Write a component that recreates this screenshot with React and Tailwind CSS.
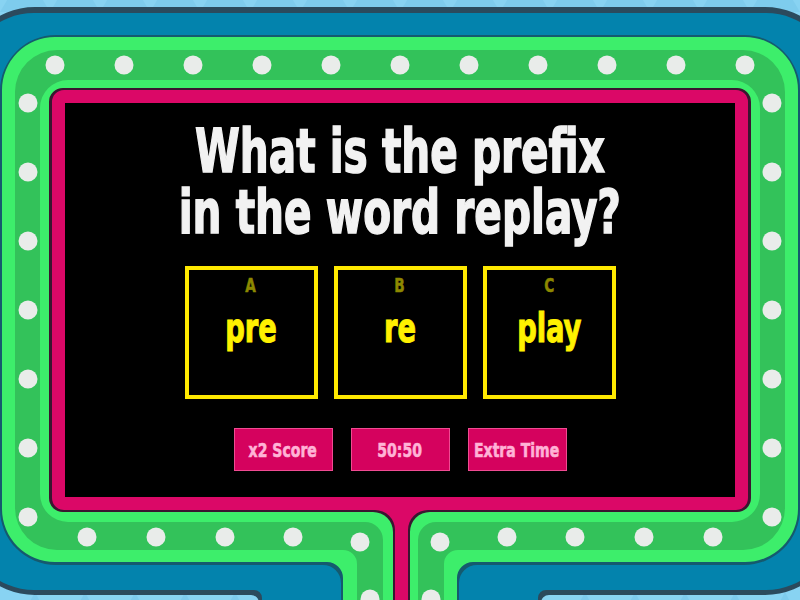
import React from "react";

function shape(x1, y1, x2, y2, r, sx1, sx2, f) {
  return `M${x1 + r},${y1} H${x2 - r} A${r},${r} 0 0 1 ${x2},${y1 + r} V${y2 - r} A${r},${r} 0 0 1 ${x2 - r},${y2} H${sx2 + f} A${f},${f} 0 0 0 ${sx2},${y2 + f} V640 H${sx1} V${y2 + f} A${f},${f} 0 0 0 ${sx1 - f},${y2} H${x1 + r} A${r},${r} 0 0 1 ${x1},${y2 - r} V${y1 + r} A${r},${r} 0 0 1 ${x1 + r},${y1} Z`;
}

const dots = [];
for (let k = 0; k <= 10; k++) dots.push([55 + 69 * k, 65]);
[103, 172, 241, 310, 379, 448, 517].forEach((y) => {
  dots.push([28, y]);
  dots.push([772, y]);
});
[87, 156, 225, 293, 507, 575, 644, 713].forEach((x) => dots.push([x, 537]));
dots.push([360, 542], [440, 542], [370, 599], [431, 599]);

const tris = [];
for (let i = -1; i < 17; i++) {
  const x = i * 50;
  tris.push(`M${x},12 L${x + 25},-30 L${x + 50},12 Z`);
}
for (let i = -1; i < 17; i++) {
  const x = i * 50 + 10;
  tris.push(`M${x},640 L${x + 25},592 L${x + 50},640 Z`);
}

function Frame() {
  return (
    <svg className="absolute inset-0" width="800" height="600" viewBox="0 0 800 600">
      <path d={tris.join(" ")} fill="#74c3e6" opacity="0.45" />
      <path d={shape(-40, 7, 840, 595, 75, 259, 541, 8)} fill="#2b4a5d" />
      <path d={shape(-34, 13, 834, 590, 68, 262, 538, 8)} fill="#0383ad" />
      <path d={shape(0, 35, 800, 565, 56, 341, 459, 18)} fill="#155a6e" />
      <path d={shape(2, 37, 798, 562, 53, 343, 457, 16)} fill="#3dee6b" />
      <path d={shape(15, 50, 785, 550, 42, 357, 444, 14)} fill="#33c25a" />
      <path d={shape(40, 80, 760, 522, 28, 383, 418, 18)} fill="#3dee6b" />
      <path d={shape(49, 88, 751, 512, 14, 393, 410, 20)} fill="#3a1630" />
      <path d={shape(52, 90, 748, 510, 12, 395, 408, 20)} fill="#db0867" />
      {dots.map(([x, y], i) => (
        <circle key={i} cx={x} cy={y} r="9.5" fill="#e9ecea" />
      ))}
    </svg>
  );
}

const answers = [
  ["A", "pre"],
  ["B", "re"],
  ["C", "play"],
];
const powers = ["x2 Score", "50:50", "Extra Time"];

export default function App() {
  return (
    <div className="relative w-[800px] h-[600px] overflow-hidden bg-[#88d3f2] font-['DejaVu_Sans_Condensed','DejaVu_Sans',sans-serif]">
      <Frame />
      <div className="relative pt-[103px] px-[65px]">
        <div className="h-[394px] bg-black flex flex-col items-center pt-[17px]">
          <div className="flex flex-col items-center text-[61px] leading-[61px] font-bold text-[#f2f2f2] whitespace-nowrap [-webkit-text-stroke:1.5px_#f2f2f2]">
            <span className="inline-block scale-x-[0.74]">What is the prefix</span>
            <span className="inline-block scale-x-[0.74]">in the word replay?</span>
          </div>
          <div className="mt-[24px] flex gap-[16px]">
            {answers.map(([l, a]) => (
              <div
                key={l}
                className="w-[133px] h-[133px] border-4 border-[#ffe900] flex flex-col items-center"
              >
                <span className="inline-block scale-x-[0.8] mt-[6px] text-[19px] leading-[19px] font-bold text-[#8d8800] [-webkit-text-stroke:0.5px_#8d8800]">
                  {l}
                </span>
                <span className="inline-block scale-x-[0.76] mt-[13px] text-[40px] leading-[40px] font-bold text-[#fff100] [-webkit-text-stroke:1px_#fff100]">
                  {a}
                </span>
              </div>
            ))}
          </div>
          <div className="mt-[29px] flex gap-[18px]">
            {powers.map((p) => (
              <div
                key={p}
                className="w-[99px] h-[43px] bg-[#d5025e] border border-[#f04b92] text-[#ffb3d6] text-[20px] font-bold flex items-center justify-center whitespace-nowrap [-webkit-text-stroke:0.6px_#ffb3d6]"
              >
                <span className="inline-block scale-x-[0.78]">{p}</span>
              </div>
            ))}
          </div>
        </div>
      </div>
    </div>
  );
}
